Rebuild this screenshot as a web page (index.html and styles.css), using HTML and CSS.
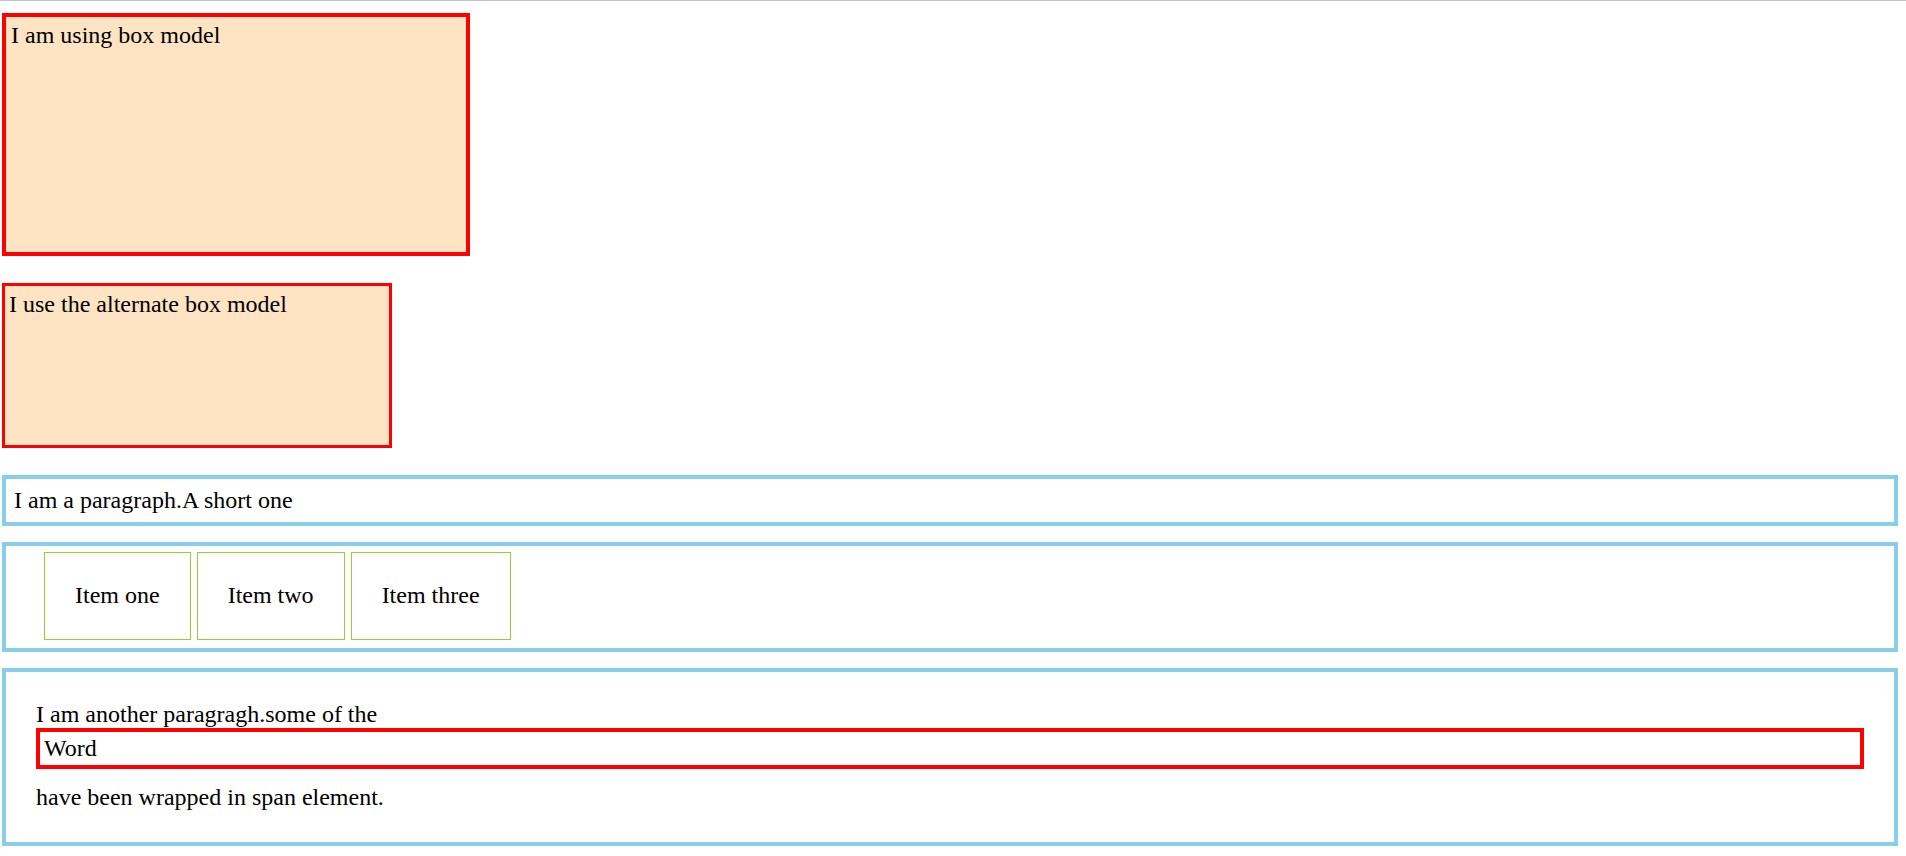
FILE: index.html
```html
<!DOCTYPE html>
<html lang="en">
<head>
<meta charset="utf-8">
<title>Box model</title>
<link rel="stylesheet" href="styles.css">
</head>
<body>
<div class="topline"></div>
<div class="box">I am using box model</div>
<div class="box alternate">I use the alternate box model</div>
<p class="panel para">I am a paragraph.A short one</p>
<ul class="panel list">
  <li>Item one</li>
  <li>Item two</li>
  <li>Item three</li>
</ul>
<p class="panel wrap">I am another paragragh.some of the <span class="word">Word</span> have been wrapped in span element.</p>
</body>
</html>
```
FILE: styles.css
```css
html, body {
  margin: 0;
  padding: 0;
  background: #ffffff;
}
body {
  font-family: "Liberation Serif", "Times New Roman", serif;
  font-size: 24px;
  line-height: 27px;
  color: #000000;
}
.topline {
  height: 1px;
  background: #c3c3c3;
}
.box {
  margin: 12px 0 0 2px;
  width: 450px;
  height: 225px;
  padding: 5px;
  border: 4px solid #ff0000;
  background: #ffe4c4;
}
.box.alternate {
  box-sizing: border-box;
  margin-top: 27px;
  width: 390px;
  height: 165px;
  padding: 5px 4px;
  border-width: 3px;
}
.panel {
  border: 4px solid #87ceeb;
  margin: 16px 8px 0 2px;
}
.para {
  margin-top: 27px;
  padding: 8px;
}
.list {
  list-style: none;
  padding: 6px 0 8px 38px;
}
.list li {
  display: inline-block;
  padding: 29px 30px 30px;
  border: 1px solid #9acd32;
}
.wrap {
  padding: 29px 30px 31px;
}
.word {
  display: block;
  margin-bottom: 15px;
  padding: 3px 4px;
  border: 4px solid #ff0000;
}
```
